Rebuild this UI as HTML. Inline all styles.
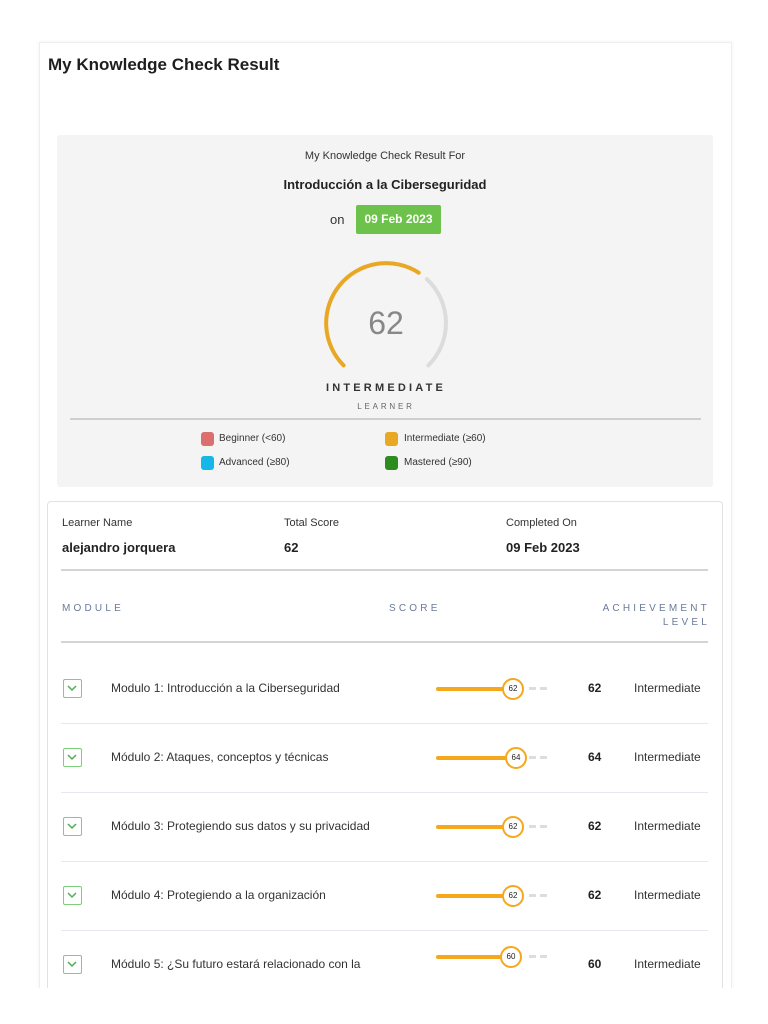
<!DOCTYPE html>
<html><head><meta charset="utf-8"><style>
*{margin:0;padding:0;box-sizing:border-box}
body{width:768px;height:1024px;background:#fff;font-family:"Liberation Sans",sans-serif;color:#222;position:relative;overflow:hidden}
.a{position:absolute;white-space:nowrap}
.outer{position:absolute;left:39px;top:42px;width:693px;height:946px;border:1px solid #eee;border-bottom:none;box-shadow:0 0 4px rgba(0,0,0,.06)}
.panel{position:absolute;left:57px;top:135px;width:656px;height:352px;background:#f4f4f4;border-radius:3px}
.card{position:absolute;left:47px;top:501px;width:676px;height:487px;border:1px solid #e2e2e2;border-bottom:none;border-radius:4px 4px 0 0}
.sq{position:absolute;width:13px;height:14px;border-radius:3px}
.hr{position:absolute;left:61px;width:647px;height:2px;background:#d4d4d4}
.sep{position:absolute;left:61px;width:647px;height:1px;background:#e6e8f0}
.chk{position:absolute;left:63px;width:19px;height:19px;border:1.5px solid #7cd07c;border-radius:2px}
.hd{font-size:10px;letter-spacing:3.2px;color:#6a7a9a}
</style></head><body>
<div class="outer"></div>
<div class="a" style="left:48px;top:55px;font-size:17px;font-weight:bold;color:#1e1e1e">My Knowledge Check Result</div>
<div class="panel"></div>
<div class="a" style="left:0;width:770px;text-align:center;top:150px;font-size:11px;color:#333">My Knowledge Check Result For</div>
<div class="a" style="left:0;width:770px;text-align:center;top:177px;font-size:13px;font-weight:bold">Introducción a la Ciberseguridad</div>
<div class="a" style="left:330px;top:212px;font-size:13px;color:#333">on</div>
<div class="a" style="left:356px;top:205px;width:85px;height:29px;background:#6cc24a;border-radius:2px;color:#fff;font-weight:bold;font-size:12px;text-align:center;line-height:29px">09 Feb 2023</div>
<svg class="a" style="left:0;top:0" width="768" height="420">
<path d="M343.6 365.4 A60 60 0 0 1 418.7 272.7" fill="none" stroke="#e8a823" stroke-width="4" stroke-linecap="round"/>
<path d="M426.9 279.1 A60 60 0 0 1 428.4 365.4" fill="none" stroke="#dcdcdc" stroke-width="4" stroke-linecap="round"/>
</svg>
<div class="a" style="left:336px;width:100px;text-align:center;top:305px;font-size:32px;color:#888">62</div>
<div class="a" style="left:0;width:772px;text-align:center;top:382px;font-size:11px;font-weight:bold;letter-spacing:3.2px;color:#333">INTERMEDIATE</div>
<div class="a" style="left:0;width:772px;text-align:center;top:402px;font-size:8px;letter-spacing:2.8px;color:#666">LEARNER</div>
<div class="a" style="left:70px;top:418px;width:631px;height:2px;background:#cfcfcf"></div>
<div class="sq" style="left:201px;top:432px;background:#dc6e6e"></div>
<div class="a" style="left:219px;top:433px;font-size:10px;color:#333">Beginner (&lt;60)</div>
<div class="sq" style="left:385px;top:432px;background:#e8a823"></div>
<div class="a" style="left:404px;top:433px;font-size:10px;color:#333">Intermediate (≥60)</div>
<div class="sq" style="left:201px;top:456px;background:#14b8e8"></div>
<div class="a" style="left:219px;top:457px;font-size:10px;color:#333">Advanced (≥80)</div>
<div class="sq" style="left:385px;top:456px;background:#2e8b1e"></div>
<div class="a" style="left:404px;top:457px;font-size:10px;color:#333">Mastered (≥90)</div>

<div class="card"></div>
<div class="a" style="left:62px;top:517px;font-size:11px;color:#333">Learner Name</div>
<div class="a" style="left:284px;top:517px;font-size:11px;color:#333">Total Score</div>
<div class="a" style="left:506px;top:517px;font-size:11px;color:#333">Completed On</div>
<div class="a" style="left:62px;top:540px;font-size:13px;font-weight:bold">alejandro jorquera</div>
<div class="a" style="left:284px;top:540px;font-size:13px;font-weight:bold">62</div>
<div class="a" style="left:506px;top:540px;font-size:13px;font-weight:bold">09 Feb 2023</div>
<div class="hr" style="top:569px"></div>
<div class="a hd" style="left:62px;top:603px">MODULE</div>
<div class="a hd" style="left:389px;top:603px">SCORE</div>
<div class="a hd" style="left:560px;width:150px;text-align:right;top:603px">ACHIEVEMENT</div>
<div class="a hd" style="left:560px;width:150px;text-align:right;top:617px">LEVEL</div>
<div class="hr" style="top:641px"></div>

<!-- rows -->
<div id="rows"></div>
<script></script>
<div class="chk" style="top:679px"><svg width="16" height="16"><path d="M4 6 L8 10 L12 6" fill="none" stroke="#4caf50" stroke-width="1.5"/></svg></div>
<div class="a" style="left:111px;top:681px;font-size:12px;color:#333">Modulo 1: Introducción a la Ciberseguridad</div>
<div class="a" style="left:436px;top:687px;width:70px;height:4px;background:#f5a81c;border-radius:2px"></div>
<div class="a" style="left:502px;top:678px;width:22px;height:22px;border:2px solid #f5a81c;border-radius:50%;background:#fff;font-size:8px;text-align:center;line-height:18px">62</div>
<div class="a" style="left:529px;top:687px;width:7px;height:3px;background:#ddd"></div><div class="a" style="left:540px;top:687px;width:7px;height:3px;background:#ddd"></div>
<div class="a" style="left:588px;top:681px;font-size:12px;font-weight:bold">62</div>
<div class="a" style="left:634px;top:681px;font-size:12px;color:#333">Intermediate</div>
<div class="sep" style="top:723px"></div>

<div class="chk" style="top:748px"><svg width="16" height="16"><path d="M4 6 L8 10 L12 6" fill="none" stroke="#4caf50" stroke-width="1.5"/></svg></div>
<div class="a" style="left:111px;top:750px;font-size:12px;color:#333">Módulo 2: Ataques, conceptos y técnicas</div>
<div class="a" style="left:436px;top:756px;width:72px;height:4px;background:#f5a81c;border-radius:2px"></div>
<div class="a" style="left:505px;top:747px;width:22px;height:22px;border:2px solid #f5a81c;border-radius:50%;background:#fff;font-size:8px;text-align:center;line-height:18px">64</div>
<div class="a" style="left:529px;top:756px;width:7px;height:3px;background:#ddd"></div><div class="a" style="left:540px;top:756px;width:7px;height:3px;background:#ddd"></div>
<div class="a" style="left:588px;top:750px;font-size:12px;font-weight:bold">64</div>
<div class="a" style="left:634px;top:750px;font-size:12px;color:#333">Intermediate</div>
<div class="sep" style="top:792px"></div>

<div class="chk" style="top:817px"><svg width="16" height="16"><path d="M4 6 L8 10 L12 6" fill="none" stroke="#4caf50" stroke-width="1.5"/></svg></div>
<div class="a" style="left:111px;top:819px;font-size:12px;color:#333">Módulo 3: Protegiendo sus datos y su privacidad</div>
<div class="a" style="left:436px;top:825px;width:70px;height:4px;background:#f5a81c;border-radius:2px"></div>
<div class="a" style="left:502px;top:816px;width:22px;height:22px;border:2px solid #f5a81c;border-radius:50%;background:#fff;font-size:8px;text-align:center;line-height:18px">62</div>
<div class="a" style="left:529px;top:825px;width:7px;height:3px;background:#ddd"></div><div class="a" style="left:540px;top:825px;width:7px;height:3px;background:#ddd"></div>
<div class="a" style="left:588px;top:819px;font-size:12px;font-weight:bold">62</div>
<div class="a" style="left:634px;top:819px;font-size:12px;color:#333">Intermediate</div>
<div class="sep" style="top:861px"></div>

<div class="chk" style="top:886px"><svg width="16" height="16"><path d="M4 6 L8 10 L12 6" fill="none" stroke="#4caf50" stroke-width="1.5"/></svg></div>
<div class="a" style="left:111px;top:888px;font-size:12px;color:#333">Módulo 4: Protegiendo a la organización</div>
<div class="a" style="left:436px;top:894px;width:70px;height:4px;background:#f5a81c;border-radius:2px"></div>
<div class="a" style="left:502px;top:885px;width:22px;height:22px;border:2px solid #f5a81c;border-radius:50%;background:#fff;font-size:8px;text-align:center;line-height:18px">62</div>
<div class="a" style="left:529px;top:894px;width:7px;height:3px;background:#ddd"></div><div class="a" style="left:540px;top:894px;width:7px;height:3px;background:#ddd"></div>
<div class="a" style="left:588px;top:888px;font-size:12px;font-weight:bold">62</div>
<div class="a" style="left:634px;top:888px;font-size:12px;color:#333">Intermediate</div>
<div class="sep" style="top:930px"></div>

<div class="chk" style="top:955px"><svg width="16" height="16"><path d="M4 6 L8 10 L12 6" fill="none" stroke="#4caf50" stroke-width="1.5"/></svg></div>
<div class="a" style="left:111px;top:957px;font-size:12px;color:#333">Módulo 5: ¿Su futuro estará relacionado con la</div>
<div class="a" style="left:436px;top:955px;width:68px;height:4px;background:#f5a81c;border-radius:2px"></div>
<div class="a" style="left:500px;top:946px;width:22px;height:22px;border:2px solid #f5a81c;border-radius:50%;background:#fff;font-size:8px;text-align:center;line-height:18px">60</div>
<div class="a" style="left:529px;top:955px;width:7px;height:3px;background:#ddd"></div><div class="a" style="left:540px;top:955px;width:7px;height:3px;background:#ddd"></div>
<div class="a" style="left:588px;top:957px;font-size:12px;font-weight:bold">60</div>
<div class="a" style="left:634px;top:957px;font-size:12px;color:#333">Intermediate</div>
<div class="a" style="left:0;top:988px;width:768px;height:36px;background:#fff"></div>
</body></html>
